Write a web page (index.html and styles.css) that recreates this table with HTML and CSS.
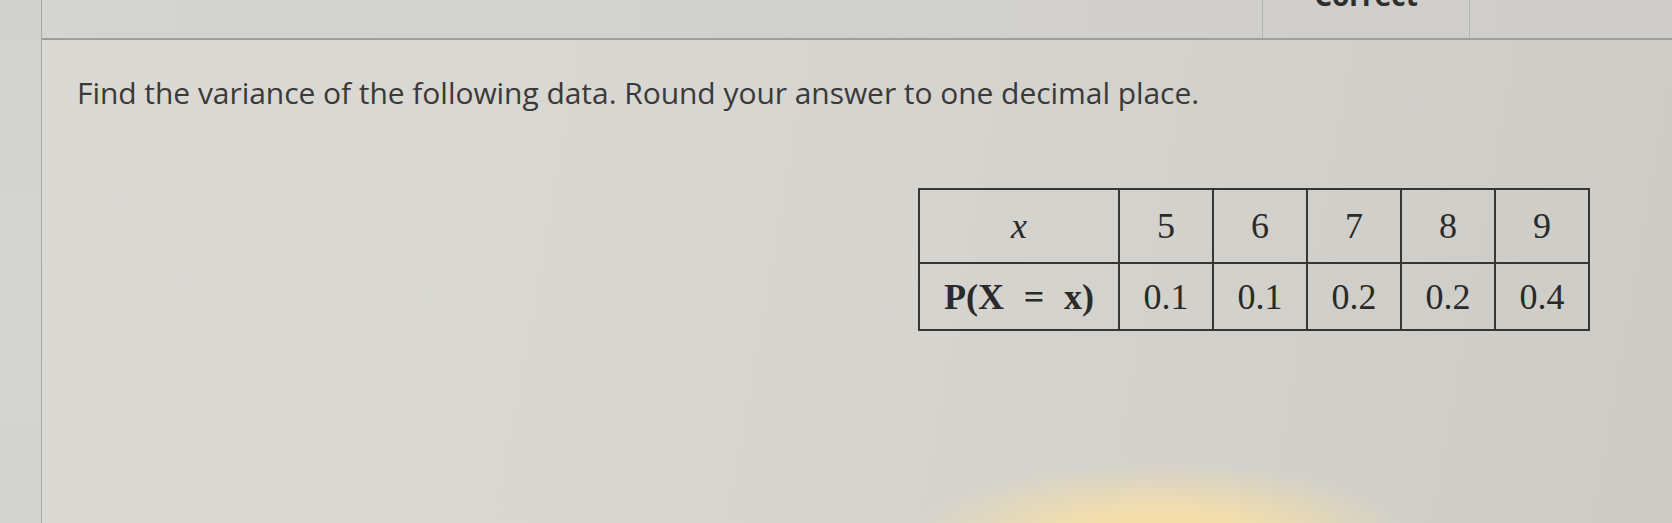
FILE: index.html
```html
<!DOCTYPE html>
<html lang="en">
<head>
<meta charset="utf-8">
<title>Variance question</title>
<link rel="stylesheet" href="styles.css">
</head>
<body>
<div class="page">
  <aside class="rail"></aside>
  <main class="panel">
    <header class="topbar">
      <div class="tb-fill"></div>
      <div class="tb-cell"><span class="tb-label">Correct</span></div>
      <div class="tb-cell tb-last"></div>
    </header>
    <section class="question">
      <p class="prompt">Find the variance of the following data. Round your answer to one decimal place.</p>
      <table class="dist">
        <tr class="row-top">
          <td class="head"><span class="var">x</span></td>
          <td>5</td><td>6</td><td>7</td><td>8</td><td>9</td>
        </tr>
        <tr class="row-bottom">
          <td class="head"><span class="prob">P(X<span class="eq">=</span>x)</span></td>
          <td>0.1</td><td>0.1</td><td>0.2</td><td>0.2</td><td>0.4</td>
        </tr>
      </table>
    </section>
  </main>
</div>
</body>
</html>
```
FILE: styles.css
```css
html, body {
  margin: 0;
  padding: 0;
}
body {
  width: 1672px;
  height: 523px;
  overflow: hidden;
  background: #d3d3d0;
  font-family: "Open Sans", "Liberation Sans", sans-serif;
}
.page {
  display: flex;
  height: 523px;
}
.rail {
  width: 41px;
  flex: none;
  background: linear-gradient(180deg, #d1d2d0 0%, #d5d6d3 60%, #d2d3d0 100%);
  border-right: 1px solid #a9aaa7;
}
.panel {
  flex: 1;
  display: flex;
  flex-direction: column;
  background:
    radial-gradient(ellipse 260px 85px at 1120px 545px, rgba(255, 222, 150, 1) 0%, rgba(250, 225, 165, 0.75) 45%, rgba(232, 222, 196, 0) 100%),
    linear-gradient(100deg, #dad9d4 0%, #d8d7d2 35%, #d3d2cd 65%, #cccbc6 100%);
}
.topbar {
  height: 38px;
  flex: none;
  display: flex;
  overflow: hidden;
  border-bottom: 2px solid #9e9e9a;
  background: linear-gradient(90deg, #d4d4d1 0%, #d1d0cc 60%, #cecdc9 100%);
}
.tb-fill {
  flex: 1;
}
.tb-cell {
  width: 206px;
  flex: none;
  border-left: 1px solid #b3b3af;
  display: flex;
  justify-content: center;
  align-items: flex-start;
}
.tb-last {
  width: 202px;
}
.tb-label {
  font-weight: 700;
  font-size: 28px;
  line-height: 28px;
  color: #2e2e2e;
  margin-top: -19px;
}
.question {
  padding: 33px 0 0 35px;
}
.prompt {
  margin: 0;
  font-size: 30px;
  line-height: 40px;
  color: #3a3a3a;
  letter-spacing: -0.05px;
}
.dist {
  margin: 75px 0 0 841px;
  border-collapse: collapse;
  font-family: "Liberation Serif", "Times New Roman", serif;
  font-size: 36px;
  color: #2a2a2a;
}
.dist td {
  border: 2px solid #363636;
  text-align: center;
  padding: 0;
  width: 92px;
}
.dist td.head {
  width: 198px;
}
.row-top td {
  height: 72px;
}
.row-bottom td {
  height: 65px;
}
.var {
  font-style: italic;
}
.prob {
  font-weight: 700;
}
.eq {
  margin: 0 0.55em;
}
```
